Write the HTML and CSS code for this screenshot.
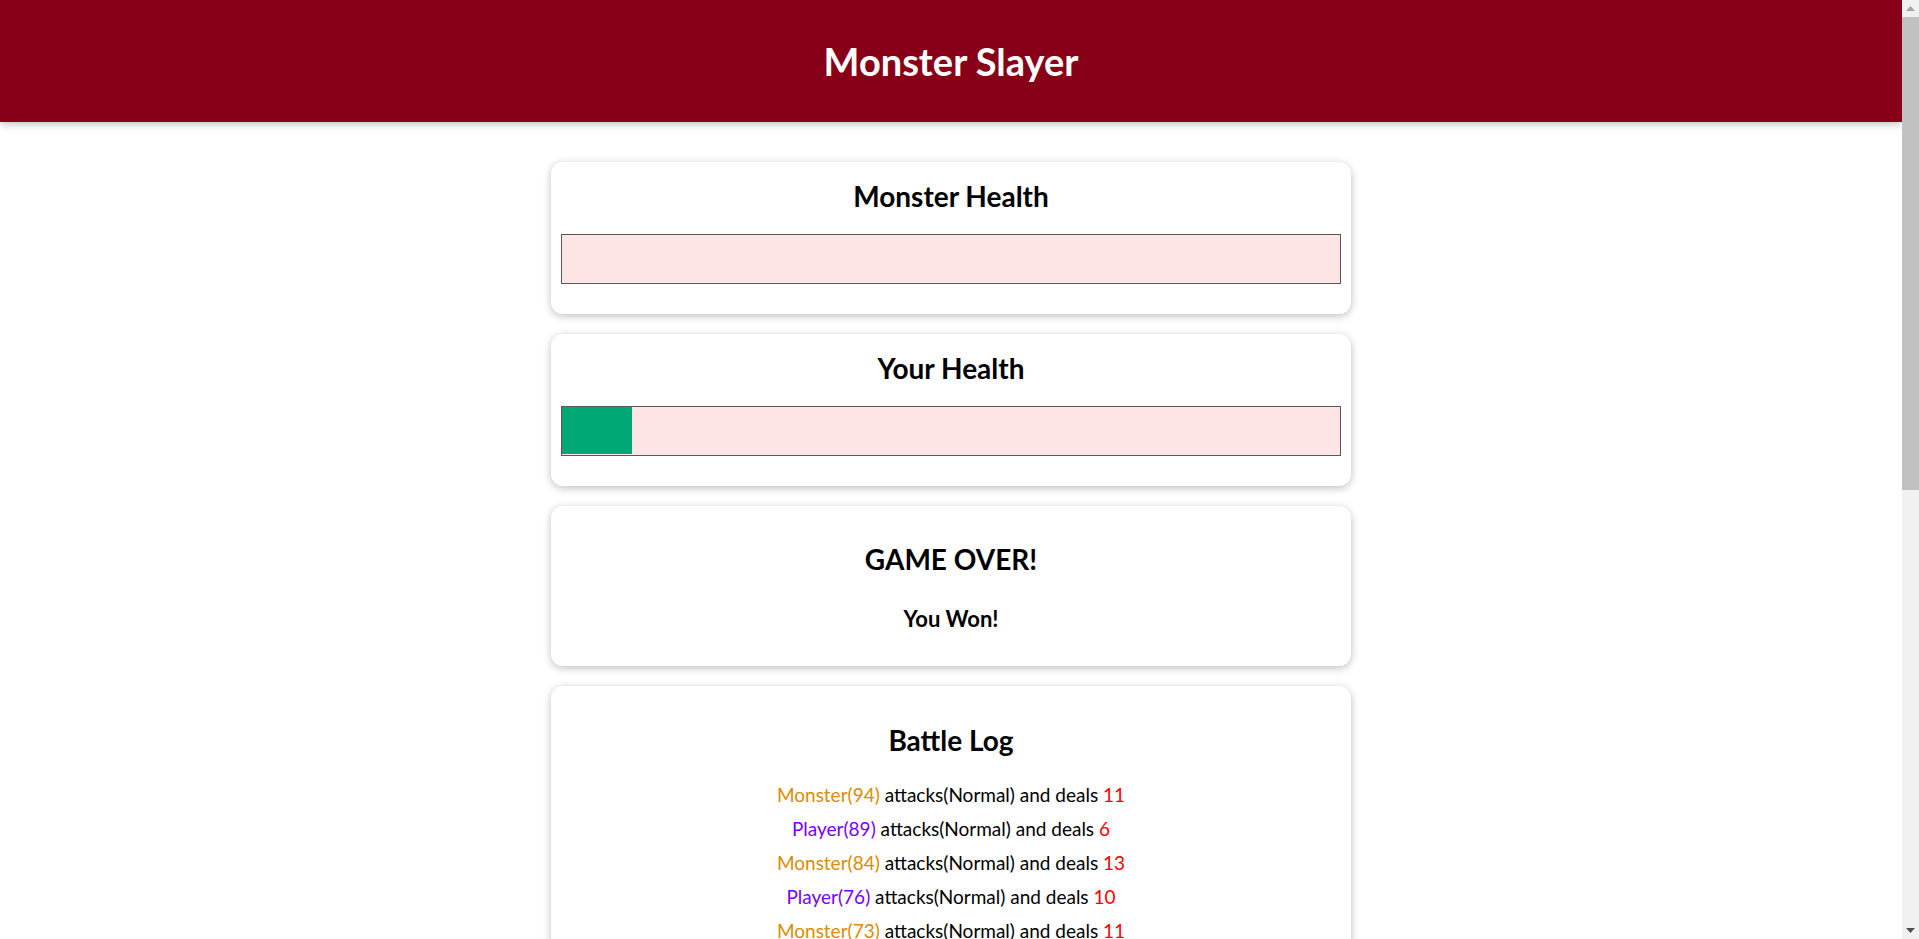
FILE: index.html
```html
<!DOCTYPE html>
<html lang="en">
<head>
    <meta charset="UTF-8">
    <meta name="viewport" content="width=device-width, initial-scale=1.0">
    <title>Monster Slayer</title>
    <link rel="stylesheet" href="styles.css">
</head>
<body>
    <div class="page">
        <header>
            <h1>Monster Slayer</h1>
        </header>
        <div id="game">
            <section id="monster" class="container">
                <h2>Monster Health</h2>
                <div class="healthbar">
                    <div class="healthbar__value" style="width: 0%;"></div>
                </div>
            </section>
            <section id="player" class="container">
                <h2>Your Health</h2>
                <div class="healthbar">
                    <div class="healthbar__value" style="width: 9%;"></div>
                </div>
            </section>
            <section class="container result">
                <h2>GAME OVER!</h2>
                <h3>You Won!</h3>
            </section>
            <section id="log" class="container">
                <h2>Battle Log</h2>
                <ul>
                    <li><span class="log--monster">Monster(94)</span> attacks(Normal) and deals <span class="log--damage">11</span></li>
                    <li><span class="log--player">Player(89)</span> attacks(Normal) and deals <span class="log--damage">6</span></li>
                    <li><span class="log--monster">Monster(84)</span> attacks(Normal) and deals <span class="log--damage">13</span></li>
                    <li><span class="log--player">Player(76)</span> attacks(Normal) and deals <span class="log--damage">10</span></li>
                    <li><span class="log--monster">Monster(73)</span> attacks(Normal) and deals <span class="log--damage">11</span></li>
                    <li><span class="log--player">Player(65)</span> attacks(Normal) and deals <span class="log--damage">8</span></li>
                    <li><span class="log--monster">Monster(61)</span> attacks(Normal) and deals <span class="log--damage">12</span></li>
                    <li><span class="log--player">Player(53)</span> attacks(Normal) and deals <span class="log--damage">9</span></li>
                    <li><span class="log--monster">Monster(50)</span> attacks(Normal) and deals <span class="log--damage">14</span></li>
                    <li><span class="log--player">Player(39)</span> attacks(Normal) and deals <span class="log--damage">7</span></li>
                </ul>
            </section>
        </div>
    </div>
    <div class="scrollbar" aria-hidden="true">
        <div class="scroll-btn up">
            <svg width="9" height="5" viewBox="0 0 9 5"><path d="M0 5 L4.5 0 L9 5 Z"/></svg>
        </div>
        <div class="scroll-track">
            <div class="scroll-thumb"></div>
        </div>
        <div class="scroll-btn down">
            <svg width="9" height="5" viewBox="0 0 9 5"><path d="M0 0 L4.5 5 L9 0 Z"/></svg>
        </div>
    </div>
</body>
</html>
```

FILE: styles.css
```css
* {
    box-sizing: border-box;
}
html {
    font-family: Lato, "Open Sans", sans-serif;
}
html, body {
    margin: 0;
    height: 100%;
    overflow: hidden;
}
body {
    display: flex;
}
.page {
    flex: 1;
    height: 100vh;
    overflow: hidden;
}
header {
    background-color: #880017;
    color: white;
    text-align: center;
    height: 122px;
    display: flex;
    align-items: center;
    justify-content: center;
    margin-bottom: 40px;
    box-shadow: 0 2px 8px rgba(0, 0, 0, 0.26);
}
header h1 {
    margin: 0;
    font-size: 38px;
    font-weight: 700;
}
#game {
    width: 90%;
    max-width: 800px;
    margin: auto;
    padding-bottom: 20px;
}
.container {
    text-align: center;
    padding: 10px;
    margin: 0 auto 20px;
    background: white;
    box-shadow: 0 2px 8px rgba(0, 0, 0, 0.26);
    border-radius: 12px;
}
h2 {
    font-size: 28px;
    line-height: 34px;
    font-weight: 700;
    margin: 26px 0 25px;
}
#monster h2,
#player h2 {
    margin: 7px 0 0;
}
h3 {
    font-size: 22px;
    line-height: 26px;
    font-weight: 700;
    margin: 30px 0 24px;
}
.healthbar {
    width: 100%;
    height: 50px;
    border: 1px solid #575757;
    margin: 21px 0 20px;
    background: #fde5e5;
}
.healthbar__value {
    background-color: #00a876;
    height: 47px;
}
#log h2 {
    margin: 27px 0 26px;
}
#log ul {
    list-style: none;
    margin: 0;
    padding: 0;
    font-size: 19px;
}
#log li {
    line-height: 24px;
    margin: 10px 0;
}
.log--player {
    color: #7700ff;
}
.log--monster {
    color: #da8d00;
}
.log--damage {
    color: red;
}

/* page scrollbar */
.scrollbar {
    width: 17px;
    height: 100vh;
    background: #f1f1f1;
    display: flex;
    flex-direction: column;
}
.scroll-btn {
    height: 17px;
    display: flex;
    align-items: center;
    justify-content: center;
}
.scroll-btn.up svg {
    fill: #a3a3a3;
}
.scroll-btn.down svg {
    fill: #505050;
}
.scroll-track {
    flex: 1;
}
.scroll-thumb {
    height: 473px;
    background: #c1c1c1;
}
```
